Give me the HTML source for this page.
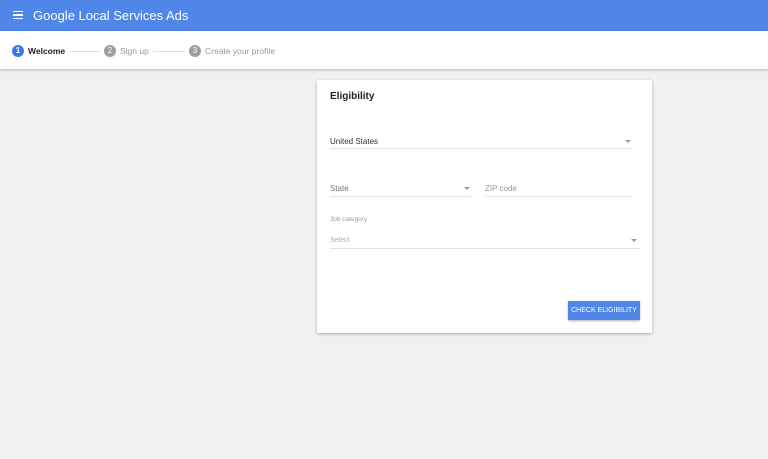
<!DOCTYPE html>
<html><head><style>
*{margin:0;padding:0;box-sizing:border-box}
body{width:768px;height:459px;background:#f1f1f1;font-family:"Liberation Sans",sans-serif;position:relative;overflow:hidden}
.top{position:absolute;left:0;top:0;width:768px;height:31px;background:#4f86e8;color:#fff}
.ham{position:absolute;left:13px;top:11px;width:10px;height:8px;border-top:1.5px solid #fff;border-bottom:1.5px solid #fff}
.ham:after{content:"";position:absolute;left:0;top:2px;width:10px;height:1.5px;background:#fff}
.title{position:absolute;left:33px;top:8px;font-size:13px}
.bar{position:absolute;left:0;top:31px;width:768px;height:38px;background:#fff;box-shadow:0 1px 3px rgba(0,0,0,.25)}
.step{position:absolute;top:45px;font-size:8.5px;color:#999;display:flex;align-items:center}
.c{width:12px;height:12px;border-radius:50%;background:#9e9e9e;color:#fff;font-size:8px;text-align:center;line-height:12px;margin-right:4px}
.line{position:absolute;top:51px;height:1px;background:#ddd}
.card{position:absolute;left:317px;top:80px;width:335px;height:253px;background:#fff;box-shadow:0 1px 3px rgba(0,0,0,.3)}
.a{position:absolute;font-size:8px}
.u{position:absolute;height:1px;background:#e3e3e3}
.arr{position:absolute;width:0;height:0;border-left:3px solid transparent;border-right:3px solid transparent;border-top:3px solid #999}
.btn{position:absolute;left:251px;top:221px;width:72px;height:19px;background:#4f86e8;color:#fff;font-size:7px;text-align:center;line-height:19px;border-radius:1px;box-shadow:0 1px 2px rgba(0,0,0,.3)}
</style></head><body>
<div class="top"><div class="ham"></div><div class="title">Google Local Services Ads</div></div>
<div class="bar"></div>
<div class="step" style="left:12px;color:#222;font-weight:bold"><div class="c" style="background:#3b78e7">1</div>Welcome</div>
<div class="line" style="left:70px;width:30px"></div>
<div class="step" style="left:104px"><div class="c">2</div>Sign up</div>
<div class="line" style="left:153px;width:32px"></div>
<div class="step" style="left:189px"><div class="c">3</div>Create your profile</div>
<div class="card">
<div class="a" style="left:13px;top:11px;font-size:10px;font-weight:bold;color:#222">Eligibility</div>
<div class="a" style="left:13px;top:57px;color:#333">United States</div>
<div class="arr" style="left:308px;top:60px"></div>
<div class="u" style="left:13px;top:68px;width:302px"></div>
<div class="a" style="left:13px;top:104px;color:#777">State</div>
<div class="arr" style="left:147px;top:107px"></div>
<div class="u" style="left:13px;top:116px;width:141px"></div>
<div class="a" style="left:168px;top:104px;color:#999">ZIP code</div>
<div class="u" style="left:168px;top:116px;width:147px"></div>
<div class="a" style="left:13px;top:136px;font-size:6.5px;color:#999">Job category</div>
<div class="a" style="left:13px;top:157px;font-size:7px;color:#aaa">Select</div>
<div class="arr" style="left:314px;top:159px"></div>
<div class="u" style="left:13px;top:168px;width:310px"></div>
<div class="btn">CHECK ELIGIBILITY</div>
</div>
</body></html>
